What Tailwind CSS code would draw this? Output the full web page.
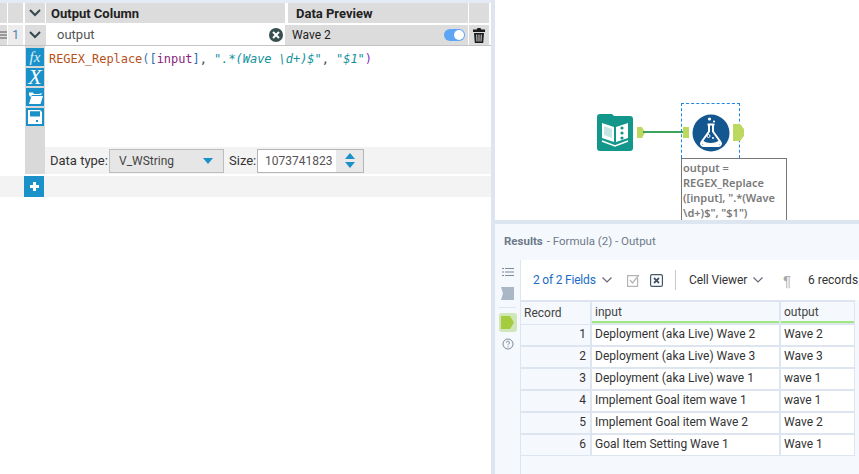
<!DOCTYPE html>
<html lang="en">
<head>
  <meta charset="UTF-8" />
  <title>Formula tool</title>
  <script src="https://cdn.jsdelivr.net/npm/@tailwindcss/browser@4"></script>
</head>
<body class="bg-white overflow-hidden">
<div class="w-[859px] h-[474px] flex overflow-hidden font-['Roboto',sans-serif] text-[12px] text-[#333]">

  <!-- FORMULA CONFIG -->
  <div class="w-[491px] shrink-0 flex flex-col bg-white">
    <div class="h-[3px] bg-[#e4ebf5]"></div>
    <!-- header -->
    <div class="h-[20px] flex bg-white">
      <div class="w-[7px] bg-[#dcdcdc]"></div>
      <div class="w-[15px] ml-[1px] bg-[#dcdcdc]"></div>
      <div class="w-[20px] ml-[2px] bg-[#dcdcdc] flex items-center justify-center">
        <svg width="12" height="8" viewBox="0 0 12 8" fill="none" stroke="#37474f" stroke-width="2"><path d="M1 1l5 5 5-5"/></svg>
      </div>
      <div class="w-[239px] ml-[1px] bg-[#dcdcdc] pl-[5px] font-bold text-[#222] text-[13px] leading-[21px]">Output Column</div>
      <div class="w-[180px] ml-[3px] bg-[#dcdcdc] pl-[8px] font-bold text-[#222] text-[13px] leading-[21px]">Data Preview</div>
      <div class="w-[20px] ml-[1px] bg-[#dcdcdc]"></div>
    </div>
    <!-- row 1 -->
    <div class="h-[21px] mt-[2px] flex border-b border-[#c4c4c4] bg-white">
      <div class="w-[7px] flex flex-col justify-center gap-[1px] bg-[#dcdcdc]">
        <div class="h-[2px] bg-[#999]"></div><div class="h-[2px] bg-[#999]"></div><div class="h-[2px] bg-[#999]"></div>
      </div>
      <div class="w-[15px] ml-[1px] bg-[#ececec] text-center text-[#4a7fb0] leading-[20px]">1</div>
      <div class="w-[20px] ml-[2px] bg-[#dcdcdc] flex items-center justify-center">
        <svg width="12" height="8" viewBox="0 0 12 8" fill="none" stroke="#37474f" stroke-width="2"><path d="M1 1l5 5 5-5"/></svg>
      </div>
      <div class="w-[240px] bg-white flex items-center justify-between pl-[11px] pr-[2px] border-l border-[#dcdcdc] text-[#555] text-[13px]">
        <span>output</span>
        <span class="w-[14px] h-[14px] rounded-full bg-[#36504f] flex items-center justify-center">
          <svg width="8" height="8" viewBox="0 0 8 8" stroke="#fff" stroke-width="2"><path d="M1 1l6 6M7 1l-6 6"/></svg>
        </span>
      </div>
      <div class="w-[183px] bg-[#dcdcdc] flex items-center justify-between pl-[7px] pr-[3px] text-[#222]">
        <span>Wave 2</span>
        <span class="w-[21px] h-[12px] rounded-full bg-[#5ea5f5] flex items-center justify-end pr-[1px]">
          <span class="w-[10px] h-[10px] rounded-full bg-white"></span>
        </span>
      </div>
      <div class="w-[20px] ml-[1px] bg-[#dcdcdc] flex items-center justify-center">
        <svg width="12" height="15" viewBox="0 0 12 15" fill="#1c1c1c"><path d="M4.500 0h3l.8 1.500H12V4H0V1.500h3.700zM1 5h10l-.8 10H1.800zM3.200 6.500l.3 7h1l-.3-7zM5.500 6.500v7h1v-7zM7.800 6.500l-.3 7h1l.3-7z" fill-rule="evenodd"/></svg>
      </div>
    </div>
    <!-- expression -->
    <div class="h-[128px] flex">
      <div class="w-[25px] bg-white"></div>
      <div class="w-[20px] bg-[#d9d9d9] flex flex-col gap-[2px] pt-[2px]">
        <div class="h-[18px] mx-auto w-[18px] bg-[#1a91c9] text-[#dff1fa] flex items-center justify-center italic font-['Liberation_Serif',serif] text-[15px] leading-none">fx</div>
        <div class="h-[18px] mx-auto w-[18px] bg-[#1a91c9] text-white flex items-center justify-center italic font-['Liberation_Serif',serif] text-[22px] leading-none">X</div>
        <div class="h-[18px] mx-auto w-[18px] bg-[#1a91c9] flex items-center justify-center">
          <svg width="15" height="13" viewBox="0 0 15 13" fill="#fff"><path d="M1 4V1.500h4l1 1.500h5l3-1-1 2H4L2.500 6zM3.500 5H15l-2.500 8H1z"/></svg>
        </div>
        <div class="h-[18px] mx-auto w-[18px] bg-[#1a91c9] flex items-center justify-center">
          <svg width="14" height="14" viewBox="0 0 14 14" fill="#fff"><path d="M0 0h12l2 2v12H0zM2 1.200v5.300h10V1.200zM8 10v2h2v-2z" fill-rule="evenodd"/></svg>
        </div>
      </div>
      <div class="flex-1 flex flex-col min-w-0">
        <div class="h-[101px] pl-[4px] pt-[5px] font-['DejaVu_Sans_Mono',monospace] text-[12px] leading-[16px] tracking-[-0.05px] whitespace-pre text-[#b8501c]">REGEX_Replace<span class="text-[#3776b6]">(</span><span class="text-[#2f6ea8]">[</span><span class="text-[#8a1c7c]">input</span><span class="text-[#2f6ea8]">]</span><span class="text-[#444]">, </span><span class="italic text-[#12919b]">".*(Wave \d+)$"</span><span class="text-[#444]">, </span><span class="italic text-[#12919b]">"$1"</span><span class="text-[#8a2fc0]">)</span></div>
        <div class="h-[27px] bg-[#f3f3f3] flex items-center pl-[5px] text-[#333] text-[13px]">
          <span class="w-[59px]">Data type:</span>
          <div class="w-[115px] h-[24px] border border-[#bdbdbd] bg-[#e6e6e6] flex items-center justify-between pl-[9px] pr-[10px] text-[12px] text-[#444]">
            <span>V_WString</span>
            <svg width="10" height="6" viewBox="0 0 10 6" fill="#1a91c9"><path d="M0 0h10L5 6z"/></svg>
          </div>
          <span class="ml-[5px] w-[28px]">Size:</span>
          <div class="w-[107px] h-[24px] border border-[#b5b5b5] bg-white flex items-center justify-between pl-[7px] text-[12px] text-[#555]">
            <span>1073741823</span>
            <div class="w-[27px] h-full bg-[#e9e9e9] flex flex-col items-center justify-center gap-[3px]">
              <svg width="10" height="6" viewBox="0 0 10 6" fill="#1a91c9"><path d="M0 6h10L5 0z"/></svg>
              <svg width="10" height="6" viewBox="0 0 10 6" fill="#1a91c9"><path d="M0 0h10L5 6z"/></svg>
            </div>
          </div>
        </div>
      </div>
    </div>
    <!-- add row -->
    <div class="h-[21px] mt-[2px] bg-[#f3f3f3] pl-[24px]">
      <div class="w-[20px] h-[21px] bg-[#1a91c9] flex items-center justify-center">
        <svg width="9" height="9" viewBox="0 0 9 9" fill="#fff"><path d="M3 0h3v3h3v3H6v3H3V6H0V3h3z"/></svg>
      </div>
    </div>
  </div>

  <!-- RIGHT SIDE -->
  <div class="flex-1 flex min-w-0">
    <div class="w-[4px] bg-[#dde5f1]"></div>
    <div class="flex-1 flex flex-col min-w-0">

      <!-- canvas -->
      <div class="relative h-[220px] bg-white overflow-hidden">
        <!-- input node -->
        <svg class="absolute left-[102px] top-[114px]" width="36" height="37" viewBox="0 0 36 37">
          <path d="M3 0h12l2 2h16a3 3 0 0 1 3 3v29a3 3 0 0 1-3 3H3a3 3 0 0 1-3-3V3a3 3 0 0 1 3-3z" fill="#13978a"/>
          <path d="M5 9l12 4v15L5 24zM31 9l-12 4v15l12-4z" fill="#fff"/>
          <path d="M7 12l8 3v9l-8-3z" fill="#13978a" opacity=".25"/>
          <circle cx="25" cy="14" r="1.600" fill="#13978a"/><circle cx="25" cy="19" r="1.600" fill="#13978a"/><circle cx="25" cy="24" r="1.600" fill="#13978a"/>
          <path d="M5 27l13 5 13-5" fill="none" stroke="#fff" stroke-width="1.500"/>
        </svg>
        <svg class="absolute left-[142px] top-[127px]" width="8" height="11" viewBox="0 0 8 11"><path d="M0 0h5l3 5.500-3 5.500H0z" fill="#bcd85f"/></svg>
        <div class="absolute left-[148px] top-[131px] w-[40px] h-[2px] bg-[#3ea35a]"></div>
        <svg class="absolute left-[188px] top-[127px]" width="6" height="11"><rect width="6" height="11" fill="#bcd85f"/></svg>
        <!-- selection -->
        <div class="absolute left-[186px] top-[103px] w-[59px] h-[55px] border border-dashed border-[#1e88e5] border-b-0"></div>
        <!-- formula node -->
        <svg class="absolute left-[197px] top-[114px]" width="38" height="38" viewBox="0 0 38 38">
          <circle cx="19" cy="19" r="18.500" fill="#14568f"/>
          <path d="M15.500 10.500h7M17 11v6.500L9.500 28a2.500 2.500 0 0 0 2 4h15a2.500 2.500 0 0 0 2-4L21 17.500V11" fill="none" stroke="#fff" stroke-width="2"/>
          <path d="M10.500 26c3 4 13 4 17 0l1 3-2 2.500H12l-2.500-2.500z" fill="#fff"/>
          <circle cx="17.500" cy="5" r="1.600" fill="#fff"/><circle cx="22" cy="7.500" r="1.100" fill="#fff"/>
          <circle cx="16.500" cy="22" r="1.500" fill="none" stroke="#fff"/><circle cx="21" cy="24" r="1" fill="#fff"/>
        </svg>
        <svg class="absolute left-[238px] top-[124px]" width="11" height="17" viewBox="0 0 11 17"><path d="M0 0h7l4 5v7l-4 5H0z" fill="#bcd85f"/></svg>
        <!-- annotation -->
        <div class="absolute left-[186px] top-[158px] w-[106px] h-[70px] border border-[#777] bg-white px-[1px] pt-[1px] font-['Noto_Sans',sans-serif] text-[11px] leading-[15px] font-semibold text-[#7a7a7a]">output =<br>REGEX_Replace<br>([input], ".*(Wave<br>\d+)$", "$1")</div>
      </div>

      <!-- results -->
      <div class="h-[4px] bg-[#dde5f1]"></div>
      <div class="flex-1 flex flex-col bg-[#f5f8fd] min-h-0">
        <div class="h-[36px] flex items-center pl-[9px] pb-[1px] text-[11.500px] text-[#6d7a88]">
          <span class="font-bold">Results</span>
          <span class="ml-[4px]">- Formula (2) - Output</span>
        </div>
        <div class="flex-1 flex min-h-0">
          <div class="w-[25px] flex flex-col items-center pt-[6px]">
            <svg width="12" height="12" viewBox="0 0 12 12" fill="#7c8a99"><path d="M0 2h2v1H0zM3 2h9v1H3zM0 5.500h2v1H0zM3 5.500h9v1H3zM0 9h2v1H0zM3 9h9v1H3z"/></svg>
            <svg class="mt-[9px]" width="13" height="13" viewBox="0 0 13 13"><path d="M0 0h13v13H0l2-6.500z" fill="#a9b7c7"/></svg>
            <div class="w-[17px] h-[1px] mt-[7px] bg-[#dde5f1]"></div>
            <div class="w-[18px] h-[19px] rounded-[3px] bg-[#cfe6b8] flex items-center justify-center mt-[5px]">
              <svg width="13" height="13" viewBox="0 0 13 13"><path d="M0 0h9l4 6.500L9 13H0z" fill="#a5cb3e"/></svg>
            </div>
            <svg class="mt-[6px]" width="12" height="12" viewBox="0 0 12 12" fill="none" stroke="#7c8a99"><circle cx="6" cy="6" r="5"/><path d="M4.500 4.700a1.500 1.500 0 1 1 2.200 1.300c-.5.300-.7.600-.7 1.200M6 8.300v1"/></svg>
          </div>
          <div class="flex-1 flex flex-col min-w-0 border-l border-[#dde5f1]">
            <!-- toolbar -->
            <div class="h-[40px] bg-white flex items-center pl-[12px] whitespace-nowrap text-[#333]">
              <span class="w-[62px] tracking-[-0.2px] text-[#1c6cc4]">2 of 2 Fields</span>
              <svg class="ml-[7px]" width="10" height="6" viewBox="0 0 10 6" fill="none" stroke="#667" stroke-width="1.200"><path d="M.5.500L5 5 9.500.500"/></svg>
              <svg class="ml-[15px]" width="13" height="13" viewBox="0 0 13 13" fill="none" stroke="#b5b5b5" stroke-width="1.200"><path d="M.6 1.600h10v10.800H.6zM3 6l2.500 3L12 1"/></svg>
              <svg class="ml-[10px]" width="13" height="13" viewBox="0 0 13 13" fill="none" stroke="#45556a" stroke-width="1.200"><rect x=".6" y=".6" width="11.800" height="11.800" rx="1.500"/><path d="M4 4l5 5M9 4l-5 5" stroke-width="1.800"/></svg>
              <div class="ml-[12px] w-[1px] h-[20px] bg-[#c9c9c9]"></div>
              <span class="ml-[13px] w-[58px] tracking-[-0.1px]">Cell Viewer</span>
              <svg class="ml-[6px]" width="10" height="6" viewBox="0 0 10 6" fill="none" stroke="#667" stroke-width="1.200"><path d="M.5.500L5 5 9.500.500"/></svg>
              <span class="ml-[20px] w-[10px] font-['Liberation_Sans',sans-serif] text-[15px] leading-none text-[#a8a8a8]">¶</span>
              <span class="ml-[15px]">6 records</span>
            </div>
            <!-- table -->
            <div class="w-[334px] flex flex-col gap-[2px] border-t border-[#dde5f1] bg-[#dde5f1] pt-[1px] pb-[1px]">
              <div class="h-[21px] grid grid-cols-[69px_187px_73px] gap-[2px] text-[#444]">
                <div class="bg-[#f5f8fd] pl-[3px] leading-[22px]">Record</div>
                <div class="bg-[#f5f8fd] pl-[3px] leading-[21px] h-[21px] border-b-2 border-[#9fe77f]">input</div>
                <div class="bg-[#f5f8fd] pl-[3px] leading-[21px] h-[21px] border-b-2 border-[#9fe77f]">output</div>
              </div>
              <div class="h-[20px] grid grid-cols-[69px_187px_73px] gap-[2px]">
                <div class="bg-[#f5f8fd] pr-[4px] text-right leading-[19px]">1</div>
                <div class="bg-white pl-[3px] leading-[19px]">Deployment (aka Live) Wave 2</div>
                <div class="bg-white pl-[3px] leading-[19px]">Wave 2</div>
              </div>
              <div class="h-[20px] grid grid-cols-[69px_187px_73px] gap-[2px]">
                <div class="bg-[#f5f8fd] pr-[4px] text-right leading-[19px]">2</div>
                <div class="bg-white pl-[3px] leading-[19px]">Deployment (aka Live) Wave 3</div>
                <div class="bg-white pl-[3px] leading-[19px]">Wave 3</div>
              </div>
              <div class="h-[20px] grid grid-cols-[69px_187px_73px] gap-[2px]">
                <div class="bg-[#f5f8fd] pr-[4px] text-right leading-[19px]">3</div>
                <div class="bg-white pl-[3px] leading-[19px]">Deployment (aka Live) wave 1</div>
                <div class="bg-white pl-[3px] leading-[19px]">wave 1</div>
              </div>
              <div class="h-[20px] grid grid-cols-[69px_187px_73px] gap-[2px]">
                <div class="bg-[#f5f8fd] pr-[4px] text-right leading-[19px]">4</div>
                <div class="bg-white pl-[3px] leading-[19px]">Implement Goal item wave 1</div>
                <div class="bg-white pl-[3px] leading-[19px]">wave 1</div>
              </div>
              <div class="h-[20px] grid grid-cols-[69px_187px_73px] gap-[2px]">
                <div class="bg-[#f5f8fd] pr-[4px] text-right leading-[19px]">5</div>
                <div class="bg-white pl-[3px] leading-[19px]">Implement Goal item Wave 2</div>
                <div class="bg-white pl-[3px] leading-[19px]">Wave 2</div>
              </div>
              <div class="h-[20px] grid grid-cols-[69px_187px_73px] gap-[2px]">
                <div class="bg-[#f5f8fd] pr-[4px] text-right leading-[19px]">6</div>
                <div class="bg-white pl-[3px] leading-[19px]">Goal Item Setting Wave 1</div>
                <div class="bg-white pl-[3px] leading-[19px]">Wave 1</div>
              </div>
            </div>
          </div>
        </div>
      </div>
    </div>
  </div>
</div>
</body>
</html>
